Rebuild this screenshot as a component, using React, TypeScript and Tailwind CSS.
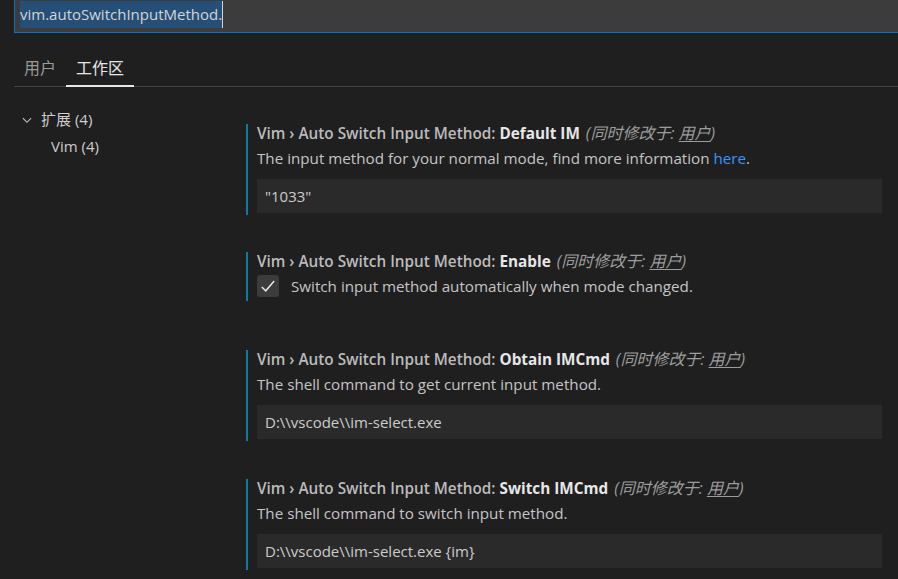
import React from "react";

const font = { fontFamily: '"Open Sans", "Noto Sans CJK SC", sans-serif' };

interface SettingProps {
  keyName: string;
  children: React.ReactNode;
  className?: string;
}

const SettingItem: React.FC<SettingProps> = ({ keyName, children, className }) => (
  <div className={"border-l-2 border-[#0c7d9d] pl-[9px] " + (className ?? "")}>
    <div className="text-[15.3px] leading-[18px] whitespace-nowrap">
      <span className="font-semibold text-[#bbbbbb]">Vim › Auto Switch Input Method: </span>
      <span className="font-bold text-[#e7e7e7]">{keyName}</span>
      <span className="ml-[6px] text-[16px] italic text-[#9d9d9d]">
        (同时修改于: <span className="underline underline-offset-2">用户</span>)
      </span>
    </div>
    {children}
  </div>
);

const TextBox: React.FC<{ value: string }> = ({ value }) => (
  <div className="mt-[12px] h-[34px] w-[625px] bg-[#2a2a2a] pl-[8px] flex items-center text-[15px] text-[#cccccc]">
    {value}
  </div>
);

export default function App() {
  return (
    <div className="w-[898px] h-[579px] overflow-hidden bg-[#1f1f1f] text-[#cccccc]" style={font}>
      {/* search box */}
      <div className="ml-[14px] h-[33px] bg-[#3c3c3c] border-l border-b border-[#0e70c0] pl-[5px] pt-[1px]">
        <span className="inline-block bg-[#264f78] text-[15px] leading-[27px] text-[#d4d4d4] border-r border-[#d4d4d4]">
          vim.autoSwitchInputMethod.
        </span>
      </div>

      {/* tabs */}
      <div className="ml-[14px] mt-[19px] flex border-b border-[#444444]">
        <div className="px-[10px] text-[16px] leading-[33px] text-[#9a9a9a]">用户</div>
        <div className="px-[10px] text-[16px] leading-[33px] text-[#e7e7e7] border-b-2 border-[#e7e7e7] -mb-px">工作区</div>
      </div>

      <div className="flex">
        {/* tree */}
        <div className="w-[246px] pt-[19px] text-[15px] text-[#cccccc]">
          <div className="flex items-center h-[27px] pl-[21px]">
            <svg width="12" height="12" viewBox="0 0 16 16" className="mr-[8px]">
              <path d="M2.5 5.5 8 11l5.5-5.5" fill="none" stroke="#c5c5c5" strokeWidth="1.4" />
            </svg>
            扩展 (4)
          </div>
          <div className="h-[27px] flex items-center pl-[51px]">Vim (4)</div>
        </div>

        {/* settings */}
        <div className="flex-1 pt-[37px]">
          <SettingItem keyName="Default IM" className="pb-[2px]">
            <div className="mt-[7px] text-[15.2px] leading-[18px] text-[#c5c5c5] whitespace-nowrap">
              The input method for your normal mode, find more information{" "}
              <span className="text-[#3794ff]">here</span>.
            </div>
            <TextBox value={'"1033"'} />
          </SettingItem>

          <SettingItem keyName="Enable" className="mt-[37px] pb-[4px]">
            <div className="mt-[5px] flex items-center">
              <div className="w-[22px] h-[22px] rounded-[3px] bg-[#3c3c3c] flex items-center justify-center">
                <svg width="18" height="18" viewBox="0 0 16 16">
                  <path d="M2.5 8.8 6 12.3l7.5-8.8" fill="none" stroke="#e7e7e7" strokeWidth="1.3" />
                </svg>
              </div>
              <span className="ml-[12px] text-[15.2px] leading-[20px] text-[#c5c5c5]">
                Switch input method automatically when mode changed.
              </span>
            </div>
          </SettingItem>

          <SettingItem keyName="Obtain IMCmd" className="mt-[49px] pb-[2px]">
            <div className="mt-[7px] text-[15.2px] leading-[18px] text-[#c5c5c5]">
              The shell command to get current input method.
            </div>
            <TextBox value={"D:\\\\vscode\\\\im-select.exe"} />
          </SettingItem>

          <SettingItem keyName="Switch IMCmd" className="mt-[38px] pb-[2px]">
            <div className="mt-[7px] text-[15.2px] leading-[18px] text-[#c5c5c5]">
              The shell command to switch input method.
            </div>
            <TextBox value={"D:\\\\vscode\\\\im-select.exe {im}"} />
          </SettingItem>
        </div>
      </div>
    </div>
  );
}
